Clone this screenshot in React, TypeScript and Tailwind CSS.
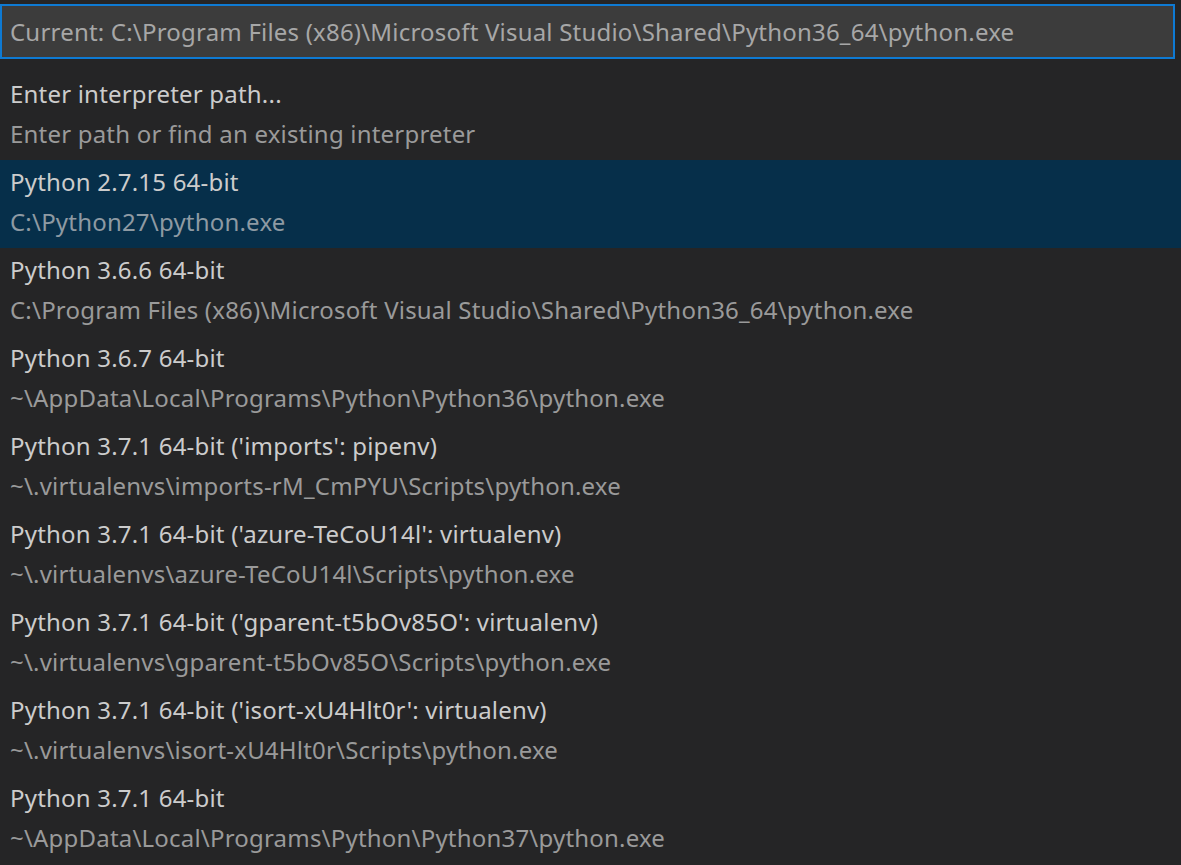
const ITEMS = [
  { label: "Enter interpreter path...", detail: "Enter path or find an existing interpreter" },
  { label: "Python 2.7.15 64-bit", detail: "C:\\Python27\\python.exe", active: true },
  { label: "Python 3.6.6 64-bit", detail: "C:\\Program Files (x86)\\Microsoft Visual Studio\\Shared\\Python36_64\\python.exe" },
  { label: "Python 3.6.7 64-bit", detail: "~\\AppData\\Local\\Programs\\Python\\Python36\\python.exe" },
  { label: "Python 3.7.1 64-bit ('imports': pipenv)", detail: "~\\.virtualenvs\\imports-rM_CmPYU\\Scripts\\python.exe" },
  { label: "Python 3.7.1 64-bit ('azure-TeCoU14l': virtualenv)", detail: "~\\.virtualenvs\\azure-TeCoU14l\\Scripts\\python.exe" },
  { label: "Python 3.7.1 64-bit ('gparent-t5bOv85O': virtualenv)", detail: "~\\.virtualenvs\\gparent-t5bOv85O\\Scripts\\python.exe" },
  { label: "Python 3.7.1 64-bit ('isort-xU4Hlt0r': virtualenv)", detail: "~\\.virtualenvs\\isort-xU4Hlt0r\\Scripts\\python.exe" },
  { label: "Python 3.7.1 64-bit", detail: "~\\AppData\\Local\\Programs\\Python\\Python37\\python.exe" },
];

function PickItem({ item }: { item: (typeof ITEMS)[number] }) {
  return (
    <div
      className={[
        "flex h-[88px] flex-col px-[10px]",
        item.active ? "bg-[#062f4a]" : "",
      ].join(" ")}
    >
      <div className="h-[44px] leading-[44px] text-[#cccccc] whitespace-nowrap">{item.label}</div>
      <div
        className={[
          "h-[36px] leading-[36px] whitespace-nowrap",
          item.active ? "text-[#8e9aa3]" : "text-[#9a9a9a]",
        ].join(" ")}
      >
        {item.detail}
      </div>
    </div>
  );
}

export default function App() {
  return (
    <div
      className="h-[865px] w-[1181px] overflow-hidden bg-[#252526] text-[24px] tracking-[0.2px]"
      style={{ fontFamily: '"Noto Sans", "Open Sans", sans-serif' }}
    >
      <div className="pt-[4px] pr-[6px]">
        <div className="flex h-[55px] items-center border-2 border-[#0e7ad3] bg-[#3c3c3c] px-[8px]">
          <span className="whitespace-nowrap text-[#a7a7a7]">
            Current: C:\Program Files (x86)\Microsoft Visual Studio\Shared\Python36_64\python.exe
          </span>
        </div>
      </div>
      <div className="pt-[13px]">
        {ITEMS.map((item) => (
          <PickItem key={item.label} item={item} />
        ))}
      </div>
    </div>
  );
}
